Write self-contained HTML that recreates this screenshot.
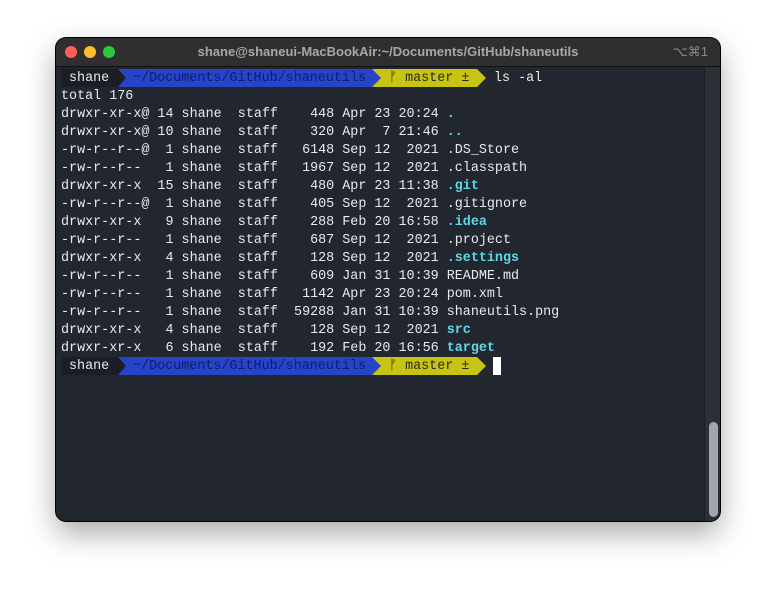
<!DOCTYPE html>
<html><head><meta charset="utf-8"><style>
html,body{margin:0;padding:0;width:777px;height:595px;background:#fff;overflow:hidden}
.win{position:absolute;left:56px;top:38px;width:664px;height:483px;border-radius:10px;background:#22262e;box-shadow:0 12px 30px rgba(0,0,0,.35),0 0 0 1px #000;overflow:hidden}
.tb{position:absolute;left:0;top:0;right:0;height:28px;background:#302e30;border-bottom:1px solid #111;font:bold 13px "Liberation Sans",sans-serif;color:#a9a7a9;text-align:center;line-height:27px}
.dot{position:absolute;top:8px;width:12px;height:12px;border-radius:50%}
.kb{position:absolute;right:12px;top:0;color:#8a888a;font-weight:normal}
.sb{position:absolute;right:0;top:29px;width:15px;bottom:0;background:#2b2f36;border-left:1px solid #1a1d22}
.th{position:absolute;left:4px;width:9px;top:355px;height:95px;border-radius:5px;background:#a2a5ab}
.t{position:absolute;left:5px;top:32px;font:13.4px/18px "Liberation Mono",monospace;color:#e8eaee;white-space:pre}
.c{color:#5fd7e8;font-weight:bold}
.seg{position:absolute;height:18px;font:13.4px/18px "Liberation Mono",monospace;white-space:pre}
</style></head><body>
<div class="win">
<div class="tb">shane@shaneui-MacBookAir:~/Documents/GitHub/shaneutils<span class="kb">⌥⌘1</span>
<div class="dot" style="left:9px;background:#fe5f57"></div><div class="dot" style="left:28px;background:#febc2e"></div><div class="dot" style="left:47px;background:#28c840"></div></div>
<div class="sb"><div class="th"></div></div>
<div class="t">
total 176
drwxr-xr-x@ 14 shane  staff    448 Apr 23 20:24 <span class="c">.</span>
drwxr-xr-x@ 10 shane  staff    320 Apr  7 21:46 <span class="c">..</span>
-rw-r--r--@  1 shane  staff   6148 Sep 12  2021 .DS_Store
-rw-r--r--   1 shane  staff   1967 Sep 12  2021 .classpath
drwxr-xr-x  15 shane  staff    480 Apr 23 11:38 <span class="c">.git</span>
-rw-r--r--@  1 shane  staff    405 Sep 12  2021 .gitignore
drwxr-xr-x   9 shane  staff    288 Feb 20 16:58 <span class="c">.idea</span>
-rw-r--r--   1 shane  staff    687 Sep 12  2021 .project
drwxr-xr-x   4 shane  staff    128 Sep 12  2021 <span class="c">.settings</span>
-rw-r--r--   1 shane  staff    609 Jan 31 10:39 README.md
-rw-r--r--   1 shane  staff   1142 Apr 23 20:24 pom.xml
-rw-r--r--   1 shane  staff  59288 Jan 31 10:39 shaneutils.png
drwxr-xr-x   4 shane  staff    128 Sep 12  2021 <span class="c">src</span>
drwxr-xr-x   6 shane  staff    192 Feb 20 16:56 <span class="c">target</span>
</div>
<div style="position:absolute;left:0;top:31px">
<svg style="position:absolute;left:0;top:0" width="450" height="18"><polygon points="6,0 62,0 70,9 62,18 6,18" fill="#1b1e24"/><polygon points="62,0 316,0 325,9 316,18 62,18 70,9" fill="#2743c8"/><polygon points="316,0 421,0 430,9 421,18 316,18 325,9" fill="#c7c415"/></svg>
<div class="seg" style="left:13px;top:1px;color:#e8eaee">shane</div>
<div class="seg" style="left:77px;top:1px;color:#101d70">~/Documents/GitHub/shaneutils</div>
<div class="seg" style="left:333px;top:1px;color:#2a2a10">ᚠ master ±</div>
<div class="seg" style="left:438px;top:1px;color:#e8eaee">ls -al</div>
</div>
<div style="position:absolute;left:0;top:319px">
<svg style="position:absolute;left:0;top:0" width="450" height="18"><polygon points="6,0 62,0 70,9 62,18 6,18" fill="#1b1e24"/><polygon points="62,0 316,0 325,9 316,18 62,18 70,9" fill="#2743c8"/><polygon points="316,0 421,0 430,9 421,18 316,18 325,9" fill="#c7c415"/></svg>
<div class="seg" style="left:13px;top:1px;color:#e8eaee">shane</div>
<div class="seg" style="left:77px;top:1px;color:#101d70">~/Documents/GitHub/shaneutils</div>
<div class="seg" style="left:333px;top:1px;color:#2a2a10">ᚠ master ±</div>
<div style="position:absolute;left:437px;top:0;width:8px;height:18px;background:#fff"></div>
</div>
</div>
</body></html>
